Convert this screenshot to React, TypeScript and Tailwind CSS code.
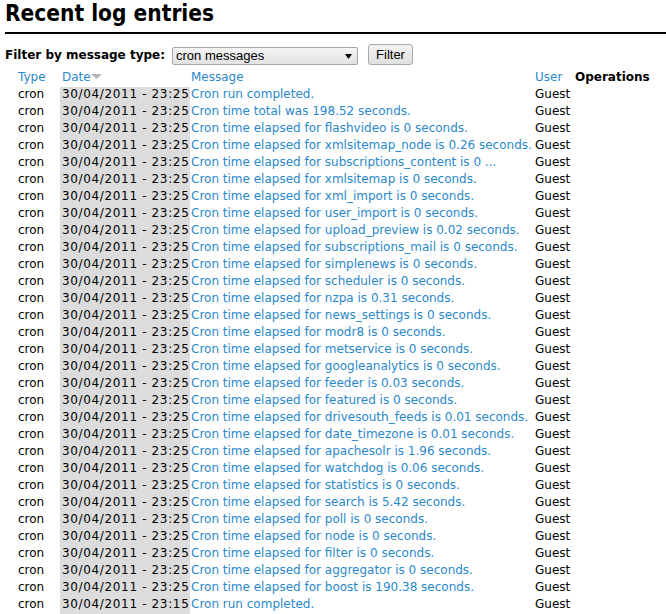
import React from "react";

const rows: [string, string][] = [
  ["23:25", "Cron run completed."],
  ["23:25", "Cron time total was 198.52 seconds."],
  ["23:25", "Cron time elapsed for flashvideo is 0 seconds."],
  ["23:25", "Cron time elapsed for xmlsitemap_node is 0.26 seconds."],
  ["23:25", "Cron time elapsed for subscriptions_content is 0 ..."],
  ["23:25", "Cron time elapsed for xmlsitemap is 0 seconds."],
  ["23:25", "Cron time elapsed for xml_import is 0 seconds."],
  ["23:25", "Cron time elapsed for user_import is 0 seconds."],
  ["23:25", "Cron time elapsed for upload_preview is 0.02 seconds."],
  ["23:25", "Cron time elapsed for subscriptions_mail is 0 seconds."],
  ["23:25", "Cron time elapsed for simplenews is 0 seconds."],
  ["23:25", "Cron time elapsed for scheduler is 0 seconds."],
  ["23:25", "Cron time elapsed for nzpa is 0.31 seconds."],
  ["23:25", "Cron time elapsed for news_settings is 0 seconds."],
  ["23:25", "Cron time elapsed for modr8 is 0 seconds."],
  ["23:25", "Cron time elapsed for metservice is 0 seconds."],
  ["23:25", "Cron time elapsed for googleanalytics is 0 seconds."],
  ["23:25", "Cron time elapsed for feeder is 0.03 seconds."],
  ["23:25", "Cron time elapsed for featured is 0 seconds."],
  ["23:25", "Cron time elapsed for drivesouth_feeds is 0.01 seconds."],
  ["23:25", "Cron time elapsed for date_timezone is 0.01 seconds."],
  ["23:25", "Cron time elapsed for apachesolr is 1.96 seconds."],
  ["23:25", "Cron time elapsed for watchdog is 0.06 seconds."],
  ["23:25", "Cron time elapsed for statistics is 0 seconds."],
  ["23:25", "Cron time elapsed for search is 5.42 seconds."],
  ["23:25", "Cron time elapsed for poll is 0 seconds."],
  ["23:25", "Cron time elapsed for node is 0 seconds."],
  ["23:25", "Cron time elapsed for filter is 0 seconds."],
  ["23:25", "Cron time elapsed for aggregator is 0 seconds."],
  ["23:25", "Cron time elapsed for boost is 190.38 seconds."],
  ["23:15", "Cron run completed."],
];

const cols = "grid grid-cols-[42px_130px_344px_40px_1fr]";

export default function App() {
  return (
    <div className="w-[666px] h-[614px] overflow-hidden bg-white text-black font-['DejaVu_Sans',sans-serif] text-[12px]">
      <div className="pl-[5px]">
        <h1 className="font-['DejaVu_Sans_Condensed','DejaVu_Sans',sans-serif] font-stretch-condensed font-bold text-[22.5px] leading-[26px] pb-[6px] border-b-2 border-black text-black">
          Recent log entries
        </h1>
        <div className="mt-[10px] flex items-start h-[21px]">
          <span className="mt-[3px] leading-[17px] font-bold text-[12px] whitespace-nowrap">
            Filter by message type:
          </span>
          <div className="ml-[7px] mt-[3px] w-[186px] h-[18px] border border-[#a6a6a6] rounded-[2px] bg-gradient-to-b from-[#f4f4f4] to-[#e2e2e2] flex items-center justify-between pl-[3px] pr-[4px] font-['Liberation_Sans',Arial,sans-serif] text-[13px] leading-[16px]">
            <span>cron messages</span>
            <svg width="8" height="5" viewBox="0 0 8 5" className="mt-[1px]">
              <polygon points="0,0 7,0 3.5,5" fill="#000" />
            </svg>
          </div>
          <div className="ml-[10px] h-[21px] w-[45px] border border-[#a9a9a9] rounded-[3px] bg-gradient-to-b from-[#f2f2f2] to-[#e0e0e0] flex items-center justify-center font-['Liberation_Sans',Arial,sans-serif] text-[13px] leading-[16px]">
            Filter
          </div>
        </div>
      </div>
      <div className="mt-[3px] ml-[18px]">
        <div className={`${cols} h-[19px] leading-[18px] text-[#2a88cc]`}>
          <div>Type</div>
          <div className="pl-[2px] flex items-start">
            <span>Date</span>
            <svg width="11" height="6" viewBox="0 0 11 6" className="mt-[6px]">
              <polygon points="0,0 11,0 5.5,5" fill="#b4b4b4" />
            </svg>
          </div>
          <div className="pl-[1px]">Message</div>
          <div className="pl-[1px]">User</div>
          <div className="pl-[1px] text-black font-bold">Operations</div>
        </div>
        {rows.map(([time, msg], i) => (
          <div key={i} className={`${cols} h-[17px] leading-[14px] whitespace-nowrap`}>
            <div>cron</div>
            <div className="pl-[2px] bg-[#dcdcdc] h-[17px] tracking-[0.65px]">30/04/2011 - {time}</div>
            <div className="pl-[1px] text-[#2a88cc] overflow-hidden">{msg}</div>
            <div className="pl-[1px]">Guest</div>
            <div></div>
          </div>
        ))}
      </div>
    </div>
  );
}
